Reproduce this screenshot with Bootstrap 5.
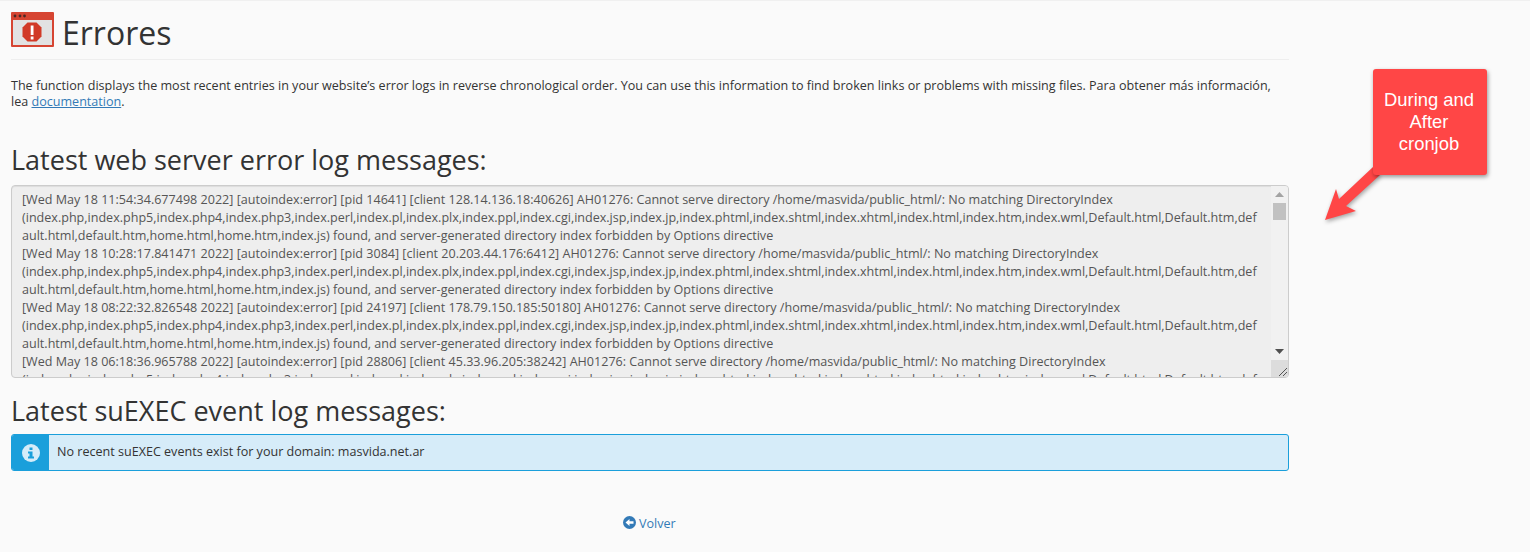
<!DOCTYPE html>
<html lang="es"><head><meta charset="utf-8"><title>Errores</title>
<link href="https://cdn.jsdelivr.net/npm/bootstrap@5.3.0/dist/css/bootstrap.min.css" rel="stylesheet">
<style>
html,body{height:552px;overflow:hidden}
body{background:#fafafa;color:#333;font-family:"Open Sans",sans-serif;font-size:12.57px;line-height:16px;border-top:1px solid #f0f0f0}
.pagewrap{width:1278px;margin-left:11px}
.headrow{height:59px;border-bottom:1px solid #eee;padding-top:11px}
.headrow svg{margin-right:8px}
.headrow h1{font-size:32px;font-weight:400;line-height:42px;margin:0;color:#333}
.intro{margin:18px 0 0;width:1270px}
.intro a{color:#337ab7}
.sechead{font-size:27px;font-weight:400;line-height:34px;margin:0;color:#333}
.firsthead{margin-top:33px}
.secondhead{margin-top:16px}
.logbox{height:193px;border:1px solid #ccc;border-radius:4px;background:#eee;overflow:hidden;box-shadow:inset 0 1px 1px rgba(0,0,0,.075);margin-top:8px}
.logtext{flex:1;padding:5px 10px;line-height:18px;color:#555;overflow:hidden;word-break:break-all;width:0;height:191px}
.sbar{width:17px;background:#f1f1f1}
.sup{height:17px}
.sthumb{width:13px;height:17px;background:#c1c1c1;margin:0 2px}
.sgrow{flex:1}
.sdn{height:17px}
.scorner{height:17px;background:#dcdcdc}
.infobar{border:1px solid #1a9fdb;border-radius:3px;background:#d6ecf9;height:37px;margin-top:6px;overflow:hidden}
.infoico{width:37px;background:#1a9fdb}
.infotxt{padding-left:8px;padding-bottom:2px;color:#333}
.backlink{margin-top:45px;margin-left:612px;color:#337ab7;text-decoration:none}
.backlink svg{margin-right:3px;vertical-align:-1px}
.callout{position:absolute;left:1373px;top:69px;width:114px;height:106px;background:#ff4646;border-radius:3px;color:#fff;font-family:"Liberation Sans",sans-serif;font-size:18.4px;line-height:22px;text-align:center;padding:20px 2px 0 0;box-shadow:1px 2px 4px rgba(0,0,0,.4)}
.calloutarrow{position:absolute;left:1320px;top:165px;filter:drop-shadow(1px 2px 2px rgba(0,0,0,.35))}
</style></head><body>
<div class="pagewrap">
  <div class="headrow d-flex align-items-start">
    <svg width="43" height="35" viewBox="0 0 43 35"><rect width="43" height="35" rx="1" fill="#d64532"/><rect x="2" y="8" width="39" height="25" fill="#e2e2e2"/><circle cx="4" cy="4" r="1.4" fill="#4a2a26"/><circle cx="9" cy="4" r="1.4" fill="#4a2a26"/><circle cx="13.500" cy="4" r="1.4" fill="#4a2a26"/><polygon points="16.500,10.500 25.500,10.500 30.500,15.500 30.500,24.500 25.500,29.500 16.500,29.500 11.500,24.500 11.500,15.500" fill="#d13a27"/><rect x="19.700" y="13.500" width="2.800" height="9.500" fill="#fff"/><rect x="19.700" y="24.500" width="2.800" height="3" fill="#fff"/></svg>
    <h1>Errores</h1>
  </div>
  <p class="intro">The function displays the most recent entries in your website’s error logs in reverse chronological order. You can use this information to find broken links or problems with missing files. Para obtener más información, lea <a href="#">documentation</a>.</p>
  <h2 class="sechead firsthead">Latest web server error log messages:</h2>
  <div class="logbox d-flex">
    <div class="logtext">[Wed May 18 11:54:34.677498 2022] [autoindex:error] [pid 14641] [client 128.14.136.18:40626] AH01276: Cannot serve directory /home/masvida/public_html/: No matching DirectoryIndex<br>(index.php,index.php5,index.php4,index.php3,index.perl,index.pl,index.plx,index.ppl,index.cgi,index.jsp,index.jp,index.phtml,index.shtml,index.xhtml,index.html,index.htm,index.wml,Default.html,Default.htm,default.html,default.htm,home.html,home.htm,index.js) found, and server-generated directory index forbidden by Options directive<br>[Wed May 18 10:28:17.841471 2022] [autoindex:error] [pid 3084] [client 20.203.44.176:6412] AH01276: Cannot serve directory /home/masvida/public_html/: No matching DirectoryIndex<br>(index.php,index.php5,index.php4,index.php3,index.perl,index.pl,index.plx,index.ppl,index.cgi,index.jsp,index.jp,index.phtml,index.shtml,index.xhtml,index.html,index.htm,index.wml,Default.html,Default.htm,default.html,default.htm,home.html,home.htm,index.js) found, and server-generated directory index forbidden by Options directive<br>[Wed May 18 08:22:32.826548 2022] [autoindex:error] [pid 24197] [client 178.79.150.185:50180] AH01276: Cannot serve directory /home/masvida/public_html/: No matching DirectoryIndex<br>(index.php,index.php5,index.php4,index.php3,index.perl,index.pl,index.plx,index.ppl,index.cgi,index.jsp,index.jp,index.phtml,index.shtml,index.xhtml,index.html,index.htm,index.wml,Default.html,Default.htm,default.html,default.htm,home.html,home.htm,index.js) found, and server-generated directory index forbidden by Options directive<br>[Wed May 18 06:18:36.965788 2022] [autoindex:error] [pid 28806] [client 45.33.96.205:38242] AH01276: Cannot serve directory /home/masvida/public_html/: No matching DirectoryIndex<br>(index.php,index.php5,index.php4,index.php3,index.perl,index.pl,index.plx,index.ppl,index.cgi,index.jsp,index.jp,index.phtml,index.shtml,index.xhtml,index.html,index.htm,index.wml,Default.html,Default.htm,def</div>
    <div class="sbar d-flex flex-column">
      <div class="sup d-flex align-items-center justify-content-center"><svg width="9" height="5"><polygon points="4.500,0 9,5 0,5" fill="#a3a3a3"/></svg></div>
      <div class="sthumb"></div>
      <div class="sgrow"></div>
      <div class="sdn d-flex align-items-center justify-content-center"><svg width="9" height="5"><polygon points="0,0 9,0 4.500,5" fill="#505050"/></svg></div>
      <div class="scorner d-flex align-items-end justify-content-end"><svg width="12" height="12"><path d="M3 11 L11 3 M7 11 L11 7" stroke="#555" stroke-width="1" fill="none"/></svg></div>
    </div>
  </div>
  <h2 class="sechead secondhead">Latest suEXEC event log messages:</h2>
  <div class="infobar d-flex">
    <div class="infoico d-flex align-items-center justify-content-center"><svg width="18" height="18" viewBox="0 0 18 18"><circle cx="9" cy="9" r="9" fill="#d6ecf9"/><rect x="7.500" y="3.500" width="3" height="2.500" fill="#1a9fdb"/><path d="M6 7.500h4.500v5h1.500v2H6v-2h1.500V9.500H6z" fill="#1a9fdb"/></svg></div>
    <div class="infotxt d-flex align-items-center">No recent suEXEC events exist for your domain: masvida.net.ar</div>
  </div>
  <a class="backlink d-inline-block" href="#"><svg width="13" height="13" viewBox="0 0 13 13"><circle cx="6.500" cy="6.500" r="6.500" fill="#337ab7"/><path d="M2.500 6.500 L6.500 3 V5.200 H10.500 V7.800 H6.500 V10 Z" fill="#fff"/></svg>Volver</a>
</div>
<div class="calloutarrow"><svg width="70" height="62" viewBox="0 0 70 62"><polygon points="53,2 60,10 26,41 36,46 5,55 16,24 19,34" fill="#ff4646"/></svg></div>
<div class="callout">During and<br>After<br>cronjob</div>
</body></html>
